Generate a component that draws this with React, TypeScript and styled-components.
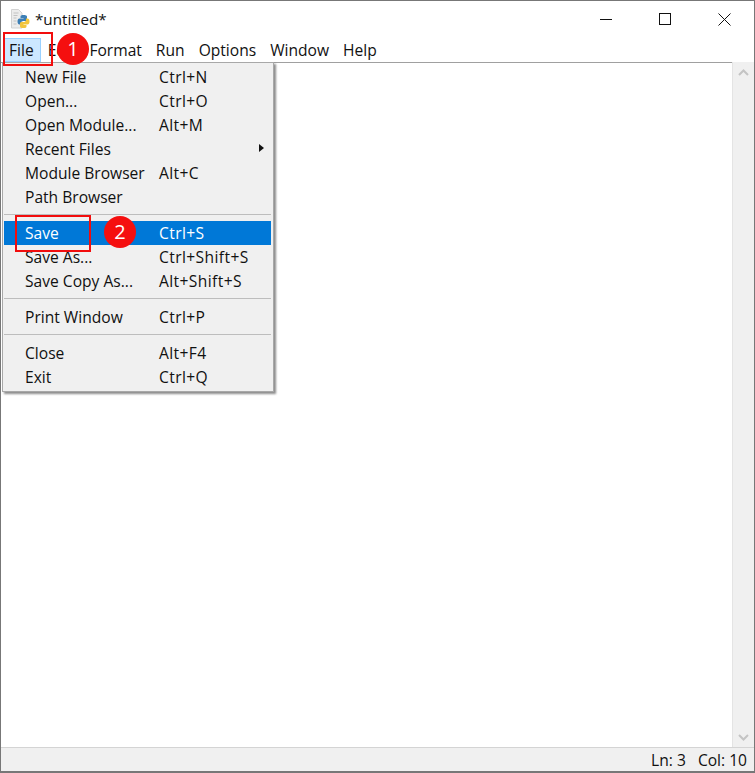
import React from "react";
import styled, { createGlobalStyle } from "styled-components";

const GlobalStyle = createGlobalStyle`
  html, body {
    margin: 0;
    padding: 0;
    background: #fff;
  }
  body {
    font-family: "Open Sans", "Noto Sans", sans-serif;
  }
`;

const Window = styled.div`
  position: relative;
  box-sizing: border-box;
  width: 755px;
  height: 773px;
  display: flex;
  flex-direction: column;
  background: #fff;
  border: 1px solid #777;
  border-bottom-width: 2px;
  overflow: hidden;
`;

const TitleBar = styled.div`
  height: 36px;
  flex: none;
  display: flex;
  align-items: center;
  padding-left: 9px;
`;

const TitleText = styled.span`
  margin-left: 5px;
  font-size: 15.2px;
  color: #111;
`;

const WindowButtons = styled.div`
  margin-left: auto;
  display: flex;
  align-items: center;
  gap: 46px;
  padding-right: 23px;
  padding-top: 1px;
`;

const MenuBar = styled.div`
  height: 25px;
  flex: none;
  display: flex;
  align-items: flex-end;
  padding-left: 3px;
`;

const MenuTitle = styled.div<{ $active?: boolean }>`
  box-sizing: border-box;
  height: 24px;
  line-height: 23px;
  padding: ${({ $active }) => ($active ? "0 6px 0 4px" : "0 6px")};
  font-size: 15.6px;
  color: #111;
  background: ${({ $active }) => ($active ? "#cce8ff" : "transparent")};
  border: 1px solid ${({ $active }) => ($active ? "#99d1ff" : "transparent")};
`;

const Body = styled.div`
  flex: 1;
  display: flex;
  min-height: 0;
`;

const Editor = styled.div`
  flex: 1;
  background: #fff;
  border-top: 1px solid #a0a0a0;
`;

const ScrollBar = styled.div`
  width: 21px;
  flex: none;
  background: #f0f0f0;
  border-left: 1px solid #e4e4e4;
  display: flex;
  flex-direction: column;
  justify-content: space-between;
  align-items: center;
  padding: 7px 0 6px;
`;

const StatusBar = styled.div`
  height: 23px;
  flex: none;
  display: flex;
  align-items: center;
  justify-content: flex-end;
  gap: 12px;
  padding-right: 7px;
  background: #f0f0f0;
  border-top: 1px solid #d4d4d4;
  font-size: 15.6px;
  color: #111;
`;

const Dropdown = styled.div`
  position: absolute;
  left: 1px;
  top: 61px;
  width: 272px;
  box-sizing: border-box;
  padding: 2px 2px 2px 1px;
  background: #f0f0f0;
  border: 1px solid #a8a8a8;
  box-shadow: 2px 2px 2px rgba(0, 0, 0, 0.45);
`;

const Row = styled.div<{ $selected?: boolean }>`
  position: relative;
  height: 24px;
  display: grid;
  grid-template-columns: 134px 1fr;
  align-items: center;
  padding-left: 21px;
  font-size: 15.6px;
  color: ${({ $selected }) => ($selected ? "#fff" : "#111")};
  background: ${({ $selected }) => ($selected ? "#0078d7" : "transparent")};
`;

const Keys = styled.span`
  letter-spacing: 0.4px;
`;

const Separator = styled.div`
  height: 1px;
  margin: 5px 0 6px;
  background: #bdbdbd;
`;

const SubArrow = styled.span`
  position: absolute;
  right: 7px;
  top: 7px;
  width: 0;
  height: 0;
  border-left: 5px solid #111;
  border-top: 4px solid transparent;
  border-bottom: 4px solid transparent;
`;

const Callout = styled.div<{ $x: number; $y: number; $w: number; $h: number }>`
  position: absolute;
  left: ${({ $x }) => $x}px;
  top: ${({ $y }) => $y}px;
  width: ${({ $w }) => $w}px;
  height: ${({ $h }) => $h}px;
  box-sizing: border-box;
  border: 2px solid #f20d0d;
`;

const Badge = styled.div<{ $x: number; $y: number }>`
  position: absolute;
  left: ${({ $x }) => $x}px;
  top: ${({ $y }) => $y}px;
  width: 32px;
  height: 32px;
  border-radius: 50%;
  background: #f50f0f;
  color: #fff;
  font-size: 20px;
  line-height: 32px;
  text-align: center;
`;

const snake =
  "M13.5 6c-2 0-3 .5-3 1.500V9h3v.5H9.500c-1.200 0-2 1-2 3s.8 3 2 3H11v-1.600c0-1 .8-1.900 1.900-1.900h2.600c.9 0 1.500-.7 1.500-1.500V7.500C17 6.500 15.500 6 13.500 6z";

const PythonIcon = () => (
  <svg width="20" height="20" viewBox="0 0 20 20">
    <path d="M1.500 .5h7l3.500 3.500v15H1.500z" fill="#ececec" stroke="#d2d2d2" />
    <path d="M3.500 4h5M3.500 6.500h4M3.500 9h3M3.500 12h3M3.500 15h3" stroke="#c2c2c2" />
    <path d={snake} fill="#3d7fb5" />
    <path d={snake} fill="#f2c53d" transform="rotate(180 13.500 12.500)" />
  </svg>
);

const Chevron = ({ up }: { up?: boolean }) => (
  <svg width="11" height="7" viewBox="0 0 11 7">
    <path d={up ? "M1 6l4.500-4.500L10 6" : "M1 1l4.500 4.500L10 1"} fill="none" stroke="#c4c4c4" strokeWidth="2" />
  </svg>
);

type Item = { label: string; keys?: string; arrow?: boolean; selected?: boolean };

const groups: Item[][] = [
  [
    { label: "New File", keys: "Ctrl+N" },
    { label: "Open...", keys: "Ctrl+O" },
    { label: "Open Module...", keys: "Alt+M" },
    { label: "Recent Files", arrow: true },
    { label: "Module Browser", keys: "Alt+C" },
    { label: "Path Browser" },
  ],
  [
    { label: "Save", keys: "Ctrl+S", selected: true },
    { label: "Save As...", keys: "Ctrl+Shift+S" },
    { label: "Save Copy As...", keys: "Alt+Shift+S" },
  ],
  [{ label: "Print Window", keys: "Ctrl+P" }],
  [
    { label: "Close", keys: "Alt+F4" },
    { label: "Exit", keys: "Ctrl+Q" },
  ],
];

const menus = ["File", "Edit", "Format", "Run", "Options", "Window", "Help"];

export default function App() {
  return (
    <>
      <GlobalStyle />
      <Window>
        <TitleBar>
          <PythonIcon />
          <TitleText>*untitled*</TitleText>
          <WindowButtons>
            <svg width="13" height="13" viewBox="0 0 13 13">
              <path d="M0 6.500h12" stroke="#111" />
            </svg>
            <svg width="13" height="13" viewBox="0 0 13 13">
              <rect x="0.500" y="0.500" width="11" height="11" fill="none" stroke="#111" />
            </svg>
            <svg width="13" height="13" viewBox="0 0 13 13">
              <path d="M0.500 0.500l12 12M12.500 0.500l-12 12" stroke="#111" />
            </svg>
          </WindowButtons>
        </TitleBar>
        <MenuBar>
          {menus.map((m, i) => (
            <MenuTitle key={m} $active={i === 0}>
              {m}
            </MenuTitle>
          ))}
        </MenuBar>
        <Body>
          <Editor />
          <ScrollBar>
            <Chevron up />
            <Chevron />
          </ScrollBar>
        </Body>
        <StatusBar>
          <span>Ln: 3</span>
          <span>Col: 10</span>
        </StatusBar>
        <Dropdown>
          {groups.map((group, g) => (
            <React.Fragment key={g}>
              {g > 0 && <Separator />}
              {group.map((item) => (
                <Row key={item.label} $selected={item.selected}>
                  <span>{item.label}</span>
                  <Keys>{item.keys}</Keys>
                  {item.arrow && <SubArrow />}
                </Row>
              ))}
            </React.Fragment>
          ))}
        </Dropdown>
        <Callout $x={2} $y={31} $w={50} $h={34} />
        <Callout $x={14} $y={214} $w={76} $h={37} />
        <Badge $x={56} $y={32}>1</Badge>
        <Badge $x={103} $y={215}>2</Badge>
      </Window>
    </>
  );
}
